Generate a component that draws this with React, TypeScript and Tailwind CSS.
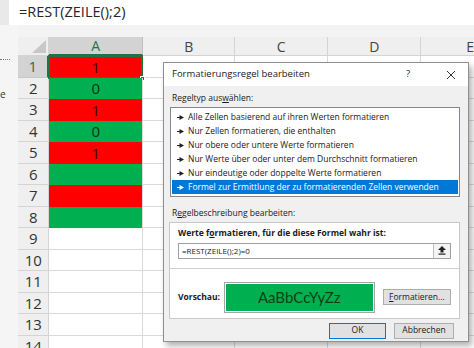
import React from "react";

const rows = [
  { n: 1, v: "1", c: "red" },
  { n: 2, v: "0", c: "green" },
  { n: 3, v: "1", c: "red" },
  { n: 4, v: "0", c: "green" },
  { n: 5, v: "1", c: "red" },
  { n: 6, v: "", c: "green" },
  { n: 7, v: "", c: "red" },
  { n: 8, v: "", c: "green" },
  { n: 9, v: "", c: "" },
  { n: 10, v: "", c: "" },
  { n: 11, v: "", c: "" },
  { n: 12, v: "", c: "" },
  { n: 13, v: "", c: "" },
  { n: 14, v: "", c: "" },
];

const items = [
  "Alle Zellen basierend auf ihren Werten formatieren",
  "Nur Zellen formatieren, die enthalten",
  "Nur obere oder untere Werte formatieren",
  "Nur Werte über oder unter dem Durchschnitt formatieren",
  "Nur eindeutige oder doppelte Werte formatieren",
  "Formel zur Ermittlung der zu formatierenden Zellen verwenden",
];

function Arrow({ white }: { white?: boolean }) {
  return (
    <svg width="7" height="5" viewBox="0 0 7 5" className="mr-[4px] shrink-0">
      <rect x="0" y="2" width="3" height="1" fill={white ? "#fff" : "#222"} />
      <polygon points="2.5,0 7,2.5 2.5,5" fill={white ? "#fff" : "#222"} />
    </svg>
  );
}

export default function App() {
  return (
    <div className="w-[474px] h-[348px] relative overflow-hidden bg-[#f3f3f3] font-['Open_Sans',sans-serif]">
      {/* formula bar */}
      <div className="flex h-[25px]">
        <div className="w-[9px] bg-[#e9e9e9]" />
        <div className="flex-1 bg-white flex items-center pl-[10px] text-[14.5px] text-[#262626] leading-none font-['Open_Sans',sans-serif]">
          =REST(ZEILE();2)
        </div>
      </div>
      <div className="flex">
        {/* left ribbon remnants */}
        <div className="w-[25px] bg-[#f5f5f5] relative">
          <div className="absolute left-0 top-[34px] w-[10px] border-t border-dotted border-[#777]" />
          <div className="absolute left-0 top-[64px] text-[10px] text-[#333] leading-none">e</div>
        </div>
        <div className="flex-1 pt-[12px] bg-[#f3f3f3]">
          {/* header row */}
          <div className="flex h-[19px] text-[14px] text-[#444]">
            <div className="w-[31px] bg-[#efefef] border-r border-b border-[#d4d4d4] relative">
              <svg className="absolute right-[2px] bottom-[2px]" width="14" height="13" viewBox="0 0 14 13">
                <polygon points="14,0 14,13 0,13" fill="#c8c8c8" />
              </svg>
            </div>
            <div className="w-[94px] bg-[#d3d3d3] border-r border-[#c0c0c0] border-b-2 border-b-[#217346] flex items-center justify-center text-[#217346]">A</div>
            <div className="w-[92px] bg-[#efefef] border-r border-b border-[#d4d4d4] flex items-center justify-center">B</div>
            <div className="w-[93px] bg-[#efefef] border-r border-b border-[#d4d4d4] flex items-center justify-center">C</div>
            <div className="w-[93px] bg-[#efefef] border-r border-b border-[#d4d4d4] flex items-center justify-center">D</div>
            <div className="flex-1 bg-[#efefef] border-b border-[#d4d4d4] flex items-center justify-start pl-[45px]">E</div>
          </div>
          {rows.map((r) => (
            <div key={r.n} className="flex h-[21.5px] text-[15px]">
              <div
                className={
                  r.n === 1
                    ? "w-[31px] bg-[#d3d3d3] border-r-2 border-r-[#217346] border-b border-[#c8c8c8] flex items-center justify-center text-[#217346]"
                    : "w-[31px] bg-[#efefef] border-r border-b border-[#d4d4d4] flex items-center justify-center text-[#333]"
                }
              >
                {r.n}
              </div>
              <div
                className={
                  (r.c === "red"
                    ? "bg-[#ff0000] text-[#420000] "
                    : r.c === "green"
                    ? "bg-[#00b050] text-[#0a3314] "
                    : "bg-white border-b border-[#dadada] ") +
                  "w-[94px] border-r border-[#dadada] flex items-center justify-center relative"
                }
              >
                {r.v}
                {r.n === 1 && (
                  <>
                    <div className="absolute inset-[-1px] border-2 border-[#217346]" />
                    <div className="absolute right-[-3px] bottom-[-3px] w-[5px] h-[5px] bg-[#217346] border border-white" />
                  </>
                )}
              </div>
              <div className="w-[92px] bg-white border-r border-b border-[#dadada]" />
              <div className="w-[93px] bg-white border-r border-b border-[#dadada]" />
              <div className="w-[93px] bg-white border-r border-b border-[#dadada]" />
              <div className="flex-1 bg-white border-b border-[#dadada]" />
            </div>
          ))}
        </div>
      </div>

      {/* dialog */}
      <div className="absolute left-[163px] top-[62px] w-[306px] h-[280px] border border-[#8f8f8f] bg-[#f0f0f0] shadow-[3px_4px_6px_rgba(0,0,0,0.3)] flex flex-col text-[#1a1a1a] font-['Open_Sans',sans-serif]">
        <div className="h-[23px] bg-white flex items-center pl-[8px] text-[9.5px] shrink-0">
          <span className="flex-1">Formatierungsregel bearbeiten</span>
          <span className="w-[12px] text-center mr-[32px]">?</span>
          <svg width="10" height="10" viewBox="0 0 10 10" className="mr-[12px]">
            <path d="M1 1 L9 9 M9 1 L1 9" stroke="#333" strokeWidth="1" />
          </svg>
        </div>
        <div className="px-[5px] pt-[6px] flex flex-col">
          <div className="text-[8.5px] leading-none pl-[3px] h-[12px] flex items-center">
            Regeltyp aus<span className="underline">w</span>ählen:
          </div>
          <div className="mt-[3px] ml-[1px] mr-[3px] bg-white border border-[#828790] px-[1px] py-[2px]">
            {items.map((t, i) => (
              <div
                key={i}
                className={
                  (i === 5 ? "bg-[#0078d7] text-white " : "text-[#1a1a1a] ") +
                  "h-[14px] flex items-center pl-[5px] text-[8.5px] whitespace-nowrap"
                }
              >
                <Arrow white={i === 5} />
                {t}
              </div>
            ))}
          </div>
          <div className="text-[8.5px] leading-none pl-[3px] mt-[10px] h-[12px] flex items-center">
            R<span className="underline">e</span>gelbeschreibung bearbeiten:
          </div>
          <div className="mt-[3px] mr-[3px] bg-white border border-[#c8c8c8] flex flex-col">
            <div className="px-[8px] pt-[6px] pb-[9px] border-b border-[#d0d0d0]">
              <div className="text-[8.5px] font-bold leading-none">
                Werte f<span className="underline">o</span>rmatieren, für die diese Formel wahr ist:
              </div>
              <div className="mt-[5px] h-[16px] border border-[#a0a0a0] flex">
                <div className="flex-1 flex items-center pl-[3px] text-[8px] text-[#222]">=REST(ZEILE();2)=0</div>
                <div className="w-[17px] border-l border-[#c0c0c0] bg-[#f4f4f4] flex items-center justify-center">
                  <svg width="8" height="9" viewBox="0 0 8 9">
                    <polygon points="4,0 8,4 5.5,4 5.5,6.5 2.5,6.5 2.5,4 0,4" fill="#222" />
                    <rect x="0.5" y="7.5" width="7" height="1.2" fill="#222" />
                  </svg>
                </div>
              </div>
            </div>
            <div className="h-[49px] pt-[8px] flex items-center pl-[8px] pr-[8px]">
              <span className="text-[8.5px] font-bold w-[47px]">Vorschau:</span>
              <div className="w-[155px] h-[31px] border border-[#a6a6a6] p-[1px] bg-white">
                <div className="w-full h-full bg-[#00b050] flex items-center justify-center text-[15px] text-[#0c3f16] font-['Lato',sans-serif]">
                  AaBbCcYyZz
                </div>
              </div>
              <div className="ml-[8px] w-[70px] h-[16px] bg-[#e1e1e1] border border-[#adadad] flex items-center justify-center text-[8.5px]">
                <span className="underline">F</span>ormatieren...
              </div>
            </div>
          </div>
          <div className="flex justify-end gap-[8px] mt-[4px] mr-[9px]">
            <div className="w-[57px] h-[16px] bg-[#e1e1e1] border border-[#0078d7] flex items-center justify-center text-[8.5px]">OK</div>
            <div className="w-[60px] h-[16px] bg-[#e1e1e1] border border-[#adadad] flex items-center justify-center text-[8.5px]">Abbrechen</div>
          </div>
        </div>
      </div>
    </div>
  );
}
